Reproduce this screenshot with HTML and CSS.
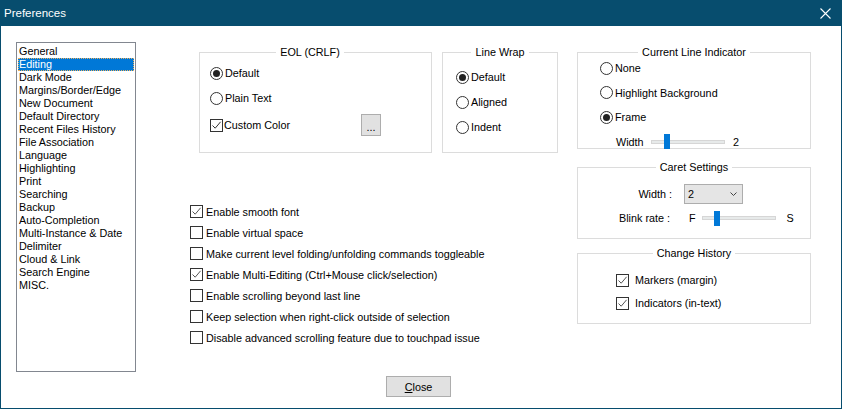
FILE: index.html
```html
<!DOCTYPE html>
<html lang="en">
  <head>
    <meta charset="UTF-8" />
    <meta name="viewport" content="width=device-width, initial-scale=1.0" />
    <title>Preferences</title>

    <link rel="stylesheet" href="styles.css">
  </head>
  <body>
    <div class="window">
      <div class="titlebar">
        <span class="title">Preferences</span>
        <svg class="close-x" width="11" height="11" viewBox="0 0 11 11">
          <path d="M0.5 0.5 L10.5 10.5 M10.5 0.5 L0.5 10.5" stroke="#fff" stroke-width="1.1" fill="none" />
        </svg>
      </div>

      <div class="dialog">
        <div class="panes">
          <ul class="list">
            <li>General</li>
            <li class="selected">Editing</li>
            <li>Dark Mode</li>
            <li>Margins/Border/Edge</li>
            <li>New Document</li>
            <li>Default Directory</li>
            <li>Recent Files History</li>
            <li>File Association</li>
            <li>Language</li>
            <li>Highlighting</li>
            <li>Print</li>
            <li>Searching</li>
            <li>Backup</li>
            <li>Auto-Completion</li>
            <li>Multi-Instance &amp; Date</li>
            <li>Delimiter</li>
            <li>Cloud &amp; Link</li>
            <li>Search Engine</li>
            <li>MISC.</li>
          </ul>

          <div class="main">
            <!-- left column: EOL + general options -->
            <div class="col col-left">
              <div class="group eol">
                <div class="group-title shift-left"><span>EOL (CRLF)</span></div>
                <div class="row"><span class="radio on"></span>Default</div>
                <div class="row"><span class="radio"></span>Plain Text</div>
                <div class="row row-color">
                  <span class="check on"><svg width="11" height="11" viewBox="0 0 11 11"><path d="M1.5 5.5 L4.2 8.2 L9.6 1.8" stroke="#333" stroke-width="1" fill="none" /></svg></span>Custom Color
                  <span class="btn-dots">...</span>
                </div>
              </div>

              <div class="options">
                <div class="row"><span class="check on"><svg width="11" height="11" viewBox="0 0 11 11"><path d="M1.5 5.5 L4.2 8.2 L9.6 1.8" stroke="#555" stroke-width="1" fill="none" /></svg></span>Enable smooth font</div>
                <div class="row"><span class="check"></span>Enable virtual space</div>
                <div class="row"><span class="check"></span>Make current level folding/unfolding commands toggleable</div>
                <div class="row"><span class="check on"><svg width="11" height="11" viewBox="0 0 11 11"><path d="M1.5 5.5 L4.2 8.2 L9.6 1.8" stroke="#555" stroke-width="1" fill="none" /></svg></span>Enable Multi-Editing (Ctrl+Mouse click/selection)</div>
                <div class="row"><span class="check"></span>Enable scrolling beyond last line</div>
                <div class="row"><span class="check"></span>Keep selection when right-click outside of selection</div>
                <div class="row"><span class="check"></span>Disable advanced scrolling feature due to touchpad issue</div>
              </div>
            </div>

            <!-- middle column: line wrap -->
            <div class="col col-mid">
              <div class="group wrap">
                <div class="group-title"><span>Line Wrap</span></div>
                <div class="row"><span class="radio on"></span>Default</div>
                <div class="row"><span class="radio"></span>Aligned</div>
                <div class="row"><span class="radio"></span>Indent</div>
              </div>
            </div>

            <!-- right column -->
            <div class="col col-right">
              <div class="group cli">
                <div class="group-title"><span>Current Line Indicator</span></div>
                <div class="row"><span class="radio"></span>None</div>
                <div class="row"><span class="radio"></span>Highlight Background</div>
                <div class="row"><span class="radio on"></span>Frame</div>
                <div class="row width-row">
                  <span class="width-label">Width</span>
                  <span class="slider"><span class="thumb thumb-cli"></span></span>
                  <span class="slider-value">2</span>
                </div>
              </div>

              <div class="group caret">
                <div class="group-title"><span>Caret Settings</span></div>
                <div class="row">
                  <span class="caret-label">Width :</span>
                  <span class="combo">2
                    <svg class="chevron" width="7" height="4" viewBox="0 0 7 4"><path d="M0.5 0.5 L3.5 3.5 L6.5 0.5" stroke="#444" stroke-width="1" fill="none" /></svg>
                  </span>
                </div>
                <div class="row">
                  <span class="caret-label blink-label">Blink rate :</span>
                  <span class="rate-f">F</span>
                  <span class="slider"><span class="thumb thumb-blink"></span></span>
                  <span class="rate-s">S</span>
                </div>
              </div>

              <div class="group history">
                <div class="group-title"><span>Change History</span></div>
                <div class="row"><span class="check on"><svg width="11" height="11" viewBox="0 0 11 11"><path d="M1.5 5.5 L4.2 8.2 L9.6 1.8" stroke="#555" stroke-width="1" fill="none" /></svg></span>Markers (margin)</div>
                <div class="row"><span class="check on"><svg width="11" height="11" viewBox="0 0 11 11"><path d="M1.5 5.5 L4.2 8.2 L9.6 1.8" stroke="#555" stroke-width="1" fill="none" /></svg></span>Indicators (in-text)</div>
              </div>
            </div>
          </div>
        </div>

        <div class="footer">
          <span class="btn-close"><u>C</u>lose</span>
        </div>
      </div>
    </div>
  </body>
</html>
```

FILE: styles.css
```css
body {
  margin: 0;
  background-color: #ffffff;
  font-family: "Liberation Sans", Arial, sans-serif;
  font-size: 10.8px;
  color: #000000;
}

.window {
  width: 842px;
  height: 409px;
  box-sizing: border-box;
  border: 1px solid #074d6e;
  border-top: 0;
  display: flex;
  flex-direction: column;
  background-color: #ffffff;
}

.titlebar {
  height: 26px;
  flex-shrink: 0;
  background-color: #074d6e;
  display: flex;
  align-items: center;
  padding-left: 3px;
}

.title {
  color: #ffffff;
  font-size: 11.5px;
}

.close-x {
  margin-left: auto;
  margin-right: 10px;
}

.dialog {
  flex: 1;
  display: flex;
  flex-direction: column;
}

.panes {
  display: flex;
  padding: 16px 0 0 15px;
}

/* category list */
.list {
  width: 120px;
  height: 330px;
  box-sizing: border-box;
  margin: 0;
  padding: 2px 1px 1px;
  list-style: none;
  border: 1px solid #828790;
  flex-shrink: 0;
}

.list li {
  height: 13px;
  line-height: 13px;
  padding-left: 1px;
  white-space: nowrap;
  box-sizing: border-box;
}

.list li.selected {
  background-color: #0078d7;
  color: #ffffff;
  outline: 1px dotted #e9b060;
  outline-offset: -1px;
}

.main {
  display: flex;
  margin-left: 54px;
  padding-top: 10px;
}

.col-left {
  width: 242px;
}

.col-mid {
  width: 116px;
  margin-left: 10px;
}

.col-right {
  width: 234px;
  margin-left: 19px;
}

/* group boxes */
.group {
  position: relative;
  box-sizing: border-box;
  border: 1px solid #dcdcdc;
  display: flex;
  flex-direction: column;
}

.group-title {
  position: absolute;
  top: -7px;
  left: 0;
  right: 0;
  text-align: center;
  line-height: 13px;
}

.group-title span {
  background-color: #ffffff;
  padding: 0 4px;
}

.group-title.shift-left {
  padding-right: 11px;
}

.row {
  display: flex;
  align-items: center;
  height: 20px;
  flex-shrink: 0;
  white-space: nowrap;
}

.radio {
  width: 13px;
  height: 13px;
  box-sizing: border-box;
  border: 1px solid #333333;
  border-radius: 50%;
  margin-right: 2px;
  display: flex;
  align-items: center;
  justify-content: center;
  flex-shrink: 0;
}

.radio.on::after {
  content: "";
  width: 7px;
  height: 7px;
  border-radius: 50%;
  background-color: #222222;
}

.check {
  width: 13px;
  height: 13px;
  box-sizing: border-box;
  border: 1px solid #333333;
  margin-right: 1px;
  display: flex;
  flex-shrink: 0;
}

.eol {
  margin-left: 9px;
  height: 101px;
  padding: 10px 0 0 10px;
  gap: 5px;
}

.eol .row-color {
  height: 24px;
  width: 171px;
}

.btn-dots {
  margin-left: auto;
  width: 20px;
  height: 22px;
  box-sizing: border-box;
  background-color: #e1e1e1;
  border: 1px solid #adadad;
  text-align: center;
  line-height: 24px;
}

.options {
  margin-top: 48px;
  display: flex;
  flex-direction: column;
}

.options .row {
  height: 21px;
}

.options .check {
  margin-right: 3px;
}

.wrap {
  height: 101px;
  padding: 14px 0 0 13px;
  gap: 5px;
}

.cli {
  height: 97px;
  padding: 5px 0 0 22px;
  gap: 4.5px;
}

.width-label {
  margin-left: 16px;
  width: 35px;
}

/* trackbars */
.slider {
  position: relative;
  width: 74px;
  height: 15px;
  display: flex;
  align-items: center;
}

.slider::before {
  content: "";
  width: 100%;
  height: 4px;
  box-sizing: border-box;
  background-color: #e7eaea;
  border: 1px solid #d6d6d6;
}

.thumb {
  position: absolute;
  top: 0;
  width: 6px;
  height: 15px;
  background-color: #0078d7;
}

.thumb-cli {
  left: 13px;
}

.thumb-blink {
  left: 12px;
}

.slider-value {
  margin-left: 8px;
}

.caret {
  margin-top: 18px;
  height: 72px;
  padding-top: 16px;
  gap: 4px;
}

.caret-label {
  width: 94px;
  text-align: right;
}

.blink-label {
  width: 92px;
}

.combo {
  margin-left: 12px;
  width: 59px;
  height: 20px;
  box-sizing: border-box;
  background-color: #e5e5e5;
  border: 1px solid #adadad;
  padding-left: 3px;
  display: flex;
  align-items: center;
}

.chevron {
  margin-left: auto;
  margin-right: 5px;
}

.rate-f {
  margin-left: 19px;
  margin-right: 6px;
}

.rate-s {
  margin-left: 11px;
}

.history {
  margin-top: 14px;
  height: 71px;
  padding: 16px 0 0 38px;
  gap: 3px;
}

.history .check {
  margin-right: 6px;
}

.footer {
  display: flex;
}

.btn-close {
  margin: 4px 0 0 385px;
  width: 65px;
  height: 21px;
  box-sizing: border-box;
  background-color: #e1e1e1;
  border: 1px solid #adadad;
  display: flex;
  align-items: center;
  justify-content: center;
}
```
